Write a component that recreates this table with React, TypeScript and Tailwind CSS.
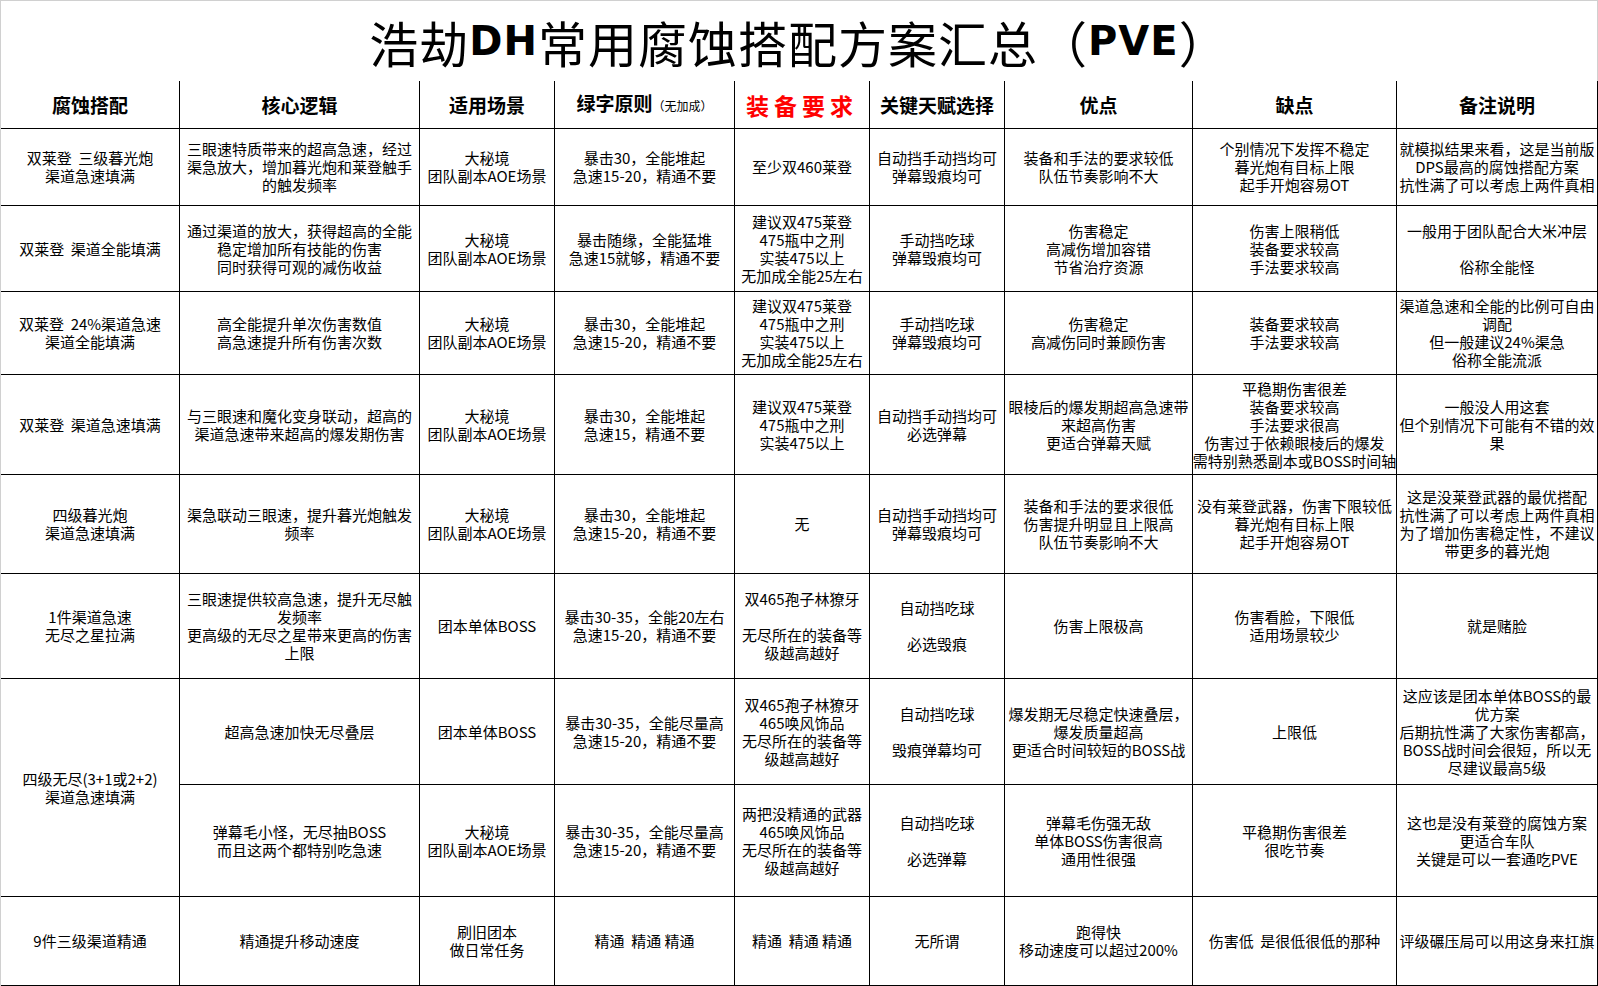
import React from 'react';

const headers: React.ReactNode[] = [
  '腐蚀搭配',
  '核心逻辑',
  '适用场景',
  <span key="g">
    绿字原则<span className="text-[12px] font-normal">（无加成）</span>
  </span>,
  <span key="z" className="text-[23px] tracking-[5px] text-[#ff0000] font-bold">装备要求</span>,
  '关键天赋选择',
  '优点',
  '缺点',
  '备注说明',
];

// each row: cells in column order; '\n' = line break in the cell
const rows: { cells: string[]; span?: boolean }[] = [
  {
    cells: [
      '双莱登  三级暮光炮\n渠道急速填满',
      '三眼速特质带来的超高急速，经过\n渠急放大，增加暮光炮和莱登触手\n的触发频率',
      '大秘境\n团队副本AOE场景',
      '暴击30，全能堆起\n急速15-20，精通不要',
      '至少双460莱登',
      '自动挡手动挡均可\n弹幕毁痕均可',
      '装备和手法的要求较低\n队伍节奏影响不大',
      '个别情况下发挥不稳定\n暮光炮有目标上限\n起手开炮容易OT',
      '就模拟结果来看，这是当前版\nDPS最高的腐蚀搭配方案\n抗性满了可以考虑上两件真相',
    ],
  },
  {
    cells: [
      '双莱登  渠道全能填满',
      '通过渠道的放大，获得超高的全能\n稳定增加所有技能的伤害\n同时获得可观的减伤收益',
      '大秘境\n团队副本AOE场景',
      '暴击随缘，全能猛堆\n急速15就够，精通不要',
      '建议双475莱登\n475瓶中之刑\n实装475以上\n无加成全能25左右',
      '手动挡吃球\n弹幕毁痕均可',
      '伤害稳定\n高减伤增加容错\n节省治疗资源',
      '伤害上限稍低\n装备要求较高\n手法要求较高',
      '一般用于团队配合大米冲层\n\n俗称全能怪',
    ],
  },
  {
    cells: [
      '双莱登  24%渠道急速\n渠道全能填满',
      '高全能提升单次伤害数值\n高急速提升所有伤害次数',
      '大秘境\n团队副本AOE场景',
      '暴击30，全能堆起\n急速15-20，精通不要',
      '建议双475莱登\n475瓶中之刑\n实装475以上\n无加成全能25左右',
      '手动挡吃球\n弹幕毁痕均可',
      '伤害稳定\n高减伤同时兼顾伤害',
      '装备要求较高\n手法要求较高',
      '渠道急速和全能的比例可自由\n调配\n但一般建议24%渠急\n俗称全能流派',
    ],
  },
  {
    cells: [
      '双莱登  渠道急速填满',
      '与三眼速和魔化变身联动，超高的\n渠道急速带来超高的爆发期伤害',
      '大秘境\n团队副本AOE场景',
      '暴击30，全能堆起\n急速15，精通不要',
      '建议双475莱登\n475瓶中之刑\n实装475以上',
      '自动挡手动挡均可\n必选弹幕',
      '眼棱后的爆发期超高急速带\n来超高伤害\n更适合弹幕天赋',
      '平稳期伤害很差\n装备要求较高\n手法要求很高\n伤害过于依赖眼棱后的爆发\n需特别熟悉副本或BOSS时间轴',
      '一般没人用这套\n但个别情况下可能有不错的效\n果',
    ],
  },
  {
    cells: [
      '四级暮光炮\n渠道急速填满',
      '渠急联动三眼速，提升暮光炮触发\n频率',
      '大秘境\n团队副本AOE场景',
      '暴击30，全能堆起\n急速15-20，精通不要',
      '无',
      '自动挡手动挡均可\n弹幕毁痕均可',
      '装备和手法的要求很低\n伤害提升明显且上限高\n队伍节奏影响不大',
      '没有莱登武器，伤害下限较低\n暮光炮有目标上限\n起手开炮容易OT',
      '这是没莱登武器的最优搭配\n抗性满了可以考虑上两件真相\n为了增加伤害稳定性，不建议\n带更多的暮光炮',
    ],
  },
  {
    cells: [
      '1件渠道急速\n无尽之星拉满',
      '三眼速提供较高急速，提升无尽触\n发频率\n更高级的无尽之星带来更高的伤害\n上限',
      '团本单体BOSS',
      '暴击30-35，全能20左右\n急速15-20，精通不要',
      '双465孢子林獠牙\n\n无尽所在的装备等\n级越高越好',
      '自动挡吃球\n\n必选毁痕',
      '伤害上限极高',
      '伤害看脸，下限低\n适用场景较少',
      '就是赌脸',
    ],
  },
  {
    span: true,
    cells: [
      '四级无尽(3+1或2+2)\n渠道急速填满',
      '超高急速加快无尽叠层',
      '团本单体BOSS',
      '暴击30-35，全能尽量高\n急速15-20，精通不要',
      '双465孢子林獠牙\n465唤风饰品\n无尽所在的装备等\n级越高越好',
      '自动挡吃球\n\n毁痕弹幕均可',
      '爆发期无尽稳定快速叠层，\n爆发质量超高\n更适合时间较短的BOSS战',
      '上限低',
      '这应该是团本单体BOSS的最\n优方案\n后期抗性满了大家伤害都高，\nBOSS战时间会很短，所以无\n尽建议最高5级',
    ],
  },
  {
    cells: [
      '弹幕毛小怪，无尽抽BOSS\n而且这两个都特别吃急速',
      '大秘境\n团队副本AOE场景',
      '暴击30-35，全能尽量高\n急速15-20，精通不要',
      '两把没精通的武器\n465唤风饰品\n无尽所在的装备等\n级越高越好',
      '自动挡吃球\n\n必选弹幕',
      '弹幕毛伤强无敌\n单体BOSS伤害很高\n通用性很强',
      '平稳期伤害很差\n很吃节奏',
      '这也是没有莱登的腐蚀方案\n更适合车队\n关键是可以一套通吃PVE',
    ],
  },
  {
    cells: [
      '9件三级渠道精通',
      '精通提升移动速度',
      '刷旧团本\n做日常任务',
      '精通  精通 精通',
      '精通  精通 精通',
      '无所谓',
      '跑得快\n移动速度可以超过200%',
      '伤害低  是很低很低的那种',
      '评级碾压局可以用这身来扛旗',
    ],
  },
];

function Cell({ children, className = '' }: { children: React.ReactNode; className?: string }) {
  return (
    <div
      className={`flex items-center justify-center text-center whitespace-pre overflow-hidden border-r border-b border-black ${className}`}
    >
      {children}
    </div>
  );
}

export default function App() {
  return (
    <div className="w-[1598px] h-[986px] bg-white text-black overflow-hidden font-['Noto_Sans_CJK_SC',sans-serif]">
      {/* Title */}
      <div className="h-[81px] border-t border-l border-r border-[#d0d0d0] border-b-black flex items-center justify-center">
        <h1 className="text-[49px] leading-none font-normal tracking-[1px] flex items-center">
          <span>浩劫</span>
          <span className="font-['DejaVu_Sans',sans-serif] font-bold text-[40px]">DH</span>
          <span>常用腐蚀搭配方案汇总（</span>
          <span className="font-['DejaVu_Sans',sans-serif] font-bold text-[40px]">PVE</span>
          <span>）</span>
        </h1>
      </div>

      {/* Table */}
      <div className="grid grid-cols-[179px_240px_135px_180px_135px_135px_188px_204px_201px] grid-rows-[48px_77px_86px_83px_100px_99px_105px_106px_112px_89px] border-l border-[#d0d0d0]">
        {headers.map((h, i) => (
          <Cell key={`h${i}`} className="text-[19px] font-bold leading-[22px]">
            {h}
          </Cell>
        ))}
        {rows.map((row, r) =>
          row.cells.map((c, i) => (
            <Cell
              key={`r${r}c${i}`}
              className={`text-[15px] leading-[18px] ${row.span && i === 0 ? 'row-span-2' : ''}`}
            >
              {c}
            </Cell>
          ))
        )}
      </div>
    </div>
  );
}
